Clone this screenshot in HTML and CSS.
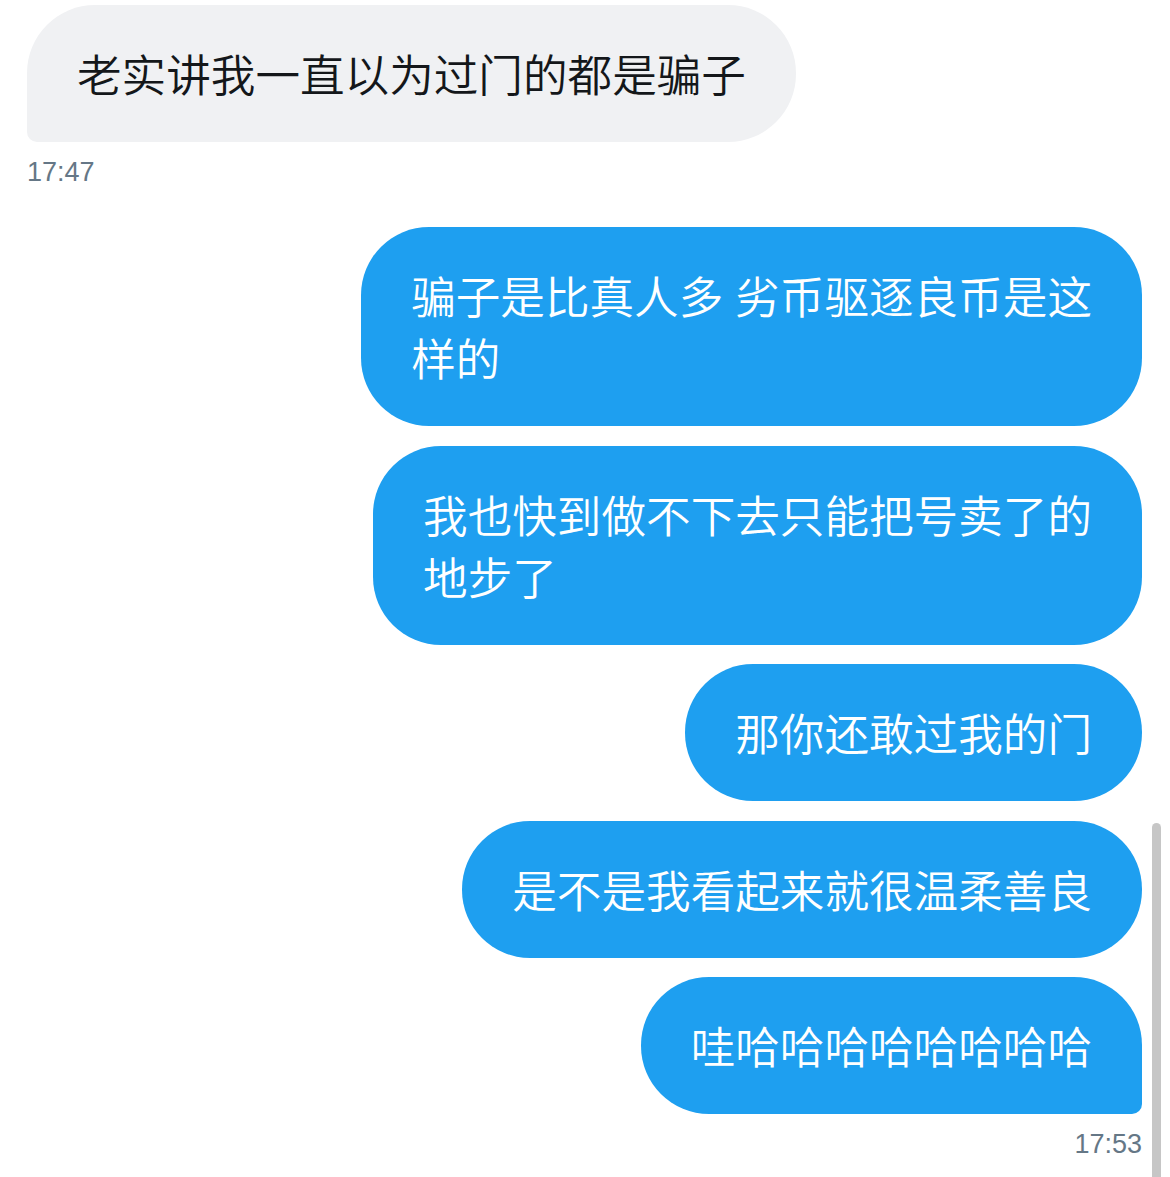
FILE: index.html
```html
<!DOCTYPE html>
<html lang="zh-CN">
<head>
    <meta charset="UTF-8">
    <meta name="viewport" content="width=device-width, initial-scale=1.0">
    <title>私信</title>
    <link rel="stylesheet" href="styles.css">
</head>
<body>

    <div class="thread">
        <div class="group in">
            <div class="bubble last">老实讲我一直以为过门的都是骗子</div>
            <div class="time">17:47</div>
        </div>

        <div class="group out">
            <div class="bubble">骗子是比真人多 劣币驱逐良币是这<br>样的</div>
            <div class="bubble">我也快到做不下去只能把号卖了的<br>地步了</div>
            <div class="bubble">那你还敢过我的门</div>
            <div class="bubble">是不是我看起来就很温柔善良</div>
            <div class="bubble last">哇哈哈哈哈哈哈哈哈</div>
            <div class="time">17:53</div>
        </div>
    </div>

    <div class="scrollbar"></div>

</body>
</html>
```

FILE: styles.css
```css
body {
    margin: 0;
    background: #fff;
    font-family: "Noto Sans CJK SC", "Liberation Sans", sans-serif;
    overflow: hidden;
}
.thread {
    display: flex;
    flex-direction: column;
    gap: 39px;
    padding: 5px 28px 0 27px;
}
.group {
    display: flex;
    flex-direction: column;
    gap: 19.5px;
}
.group.in {
    align-items: flex-start;
}
.group.out {
    align-items: flex-end;
}
.bubble {
    font-size: 44.6px;
    font-weight: 350;
    line-height: 62px;
    word-spacing: 2px;
    padding: 37px 50px 38px;
    border-radius: 68px;
    background-color: #1e9ff0;
    color: #fff;
    white-space: nowrap;
}
.in .bubble {
    background-color: #f0f1f3;
    color: #14171a;
}
.in .bubble.last {
    border-bottom-left-radius: 10px;
}
.out .bubble.last {
    border-bottom-right-radius: 10px;
}
.time {
    font-family: "Liberation Sans", Arial, sans-serif;
    font-size: 27px;
    line-height: 32px;
    color: #657786;
    margin-top: -5.5px;
}
.scrollbar {
    position: fixed;
    top: 823px;
    left: 1152px;
    width: 9px;
    height: 360px;
    border-radius: 5px;
    background: #c6c6c6;
}
```
